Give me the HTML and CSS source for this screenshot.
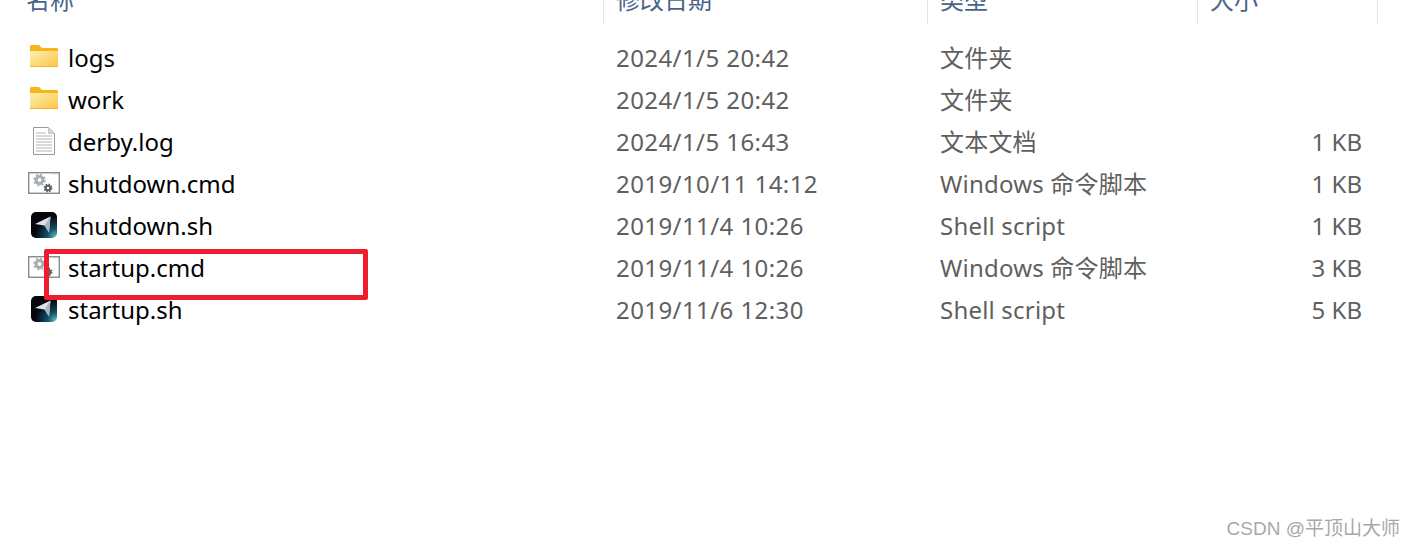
FILE: index.html
```html
<!DOCTYPE html>
<html lang="en">
<head>
    <meta charset="UTF-8">
    <meta name="viewport" content="width=device-width, initial-scale=1.0">
    <title>Explorer file list</title>
    <link rel="stylesheet" href="styles.css">
</head>
<body>
    <svg class="icon-defs" width="0" height="0">
        <defs>
            <linearGradient id="folderFill" x1="0" y1="0" x2="1" y2="1">
                <stop offset="0" stop-color="#fdeeb4"/>
                <stop offset="1" stop-color="#fcc73f"/>
            </linearGradient>
            <radialGradient id="termGlow" cx="0.95" cy="0.95" r="0.8">
                <stop offset="0" stop-color="#5cc4b0"/>
                <stop offset="0.4" stop-color="#12506a"/>
                <stop offset="1" stop-color="#04060b"/>
            </radialGradient>
            <symbol id="folder" viewBox="0 0 28 22">
                <path d="M0 1.500C0 .7.7 0 1.500 0h7.500l3 3h14.500c.8 0 1.500.7 1.500 1.500V20.500c0 .8-.7 1.500-1.500 1.500H1.500C.7 22 0 21.300 0 20.500z" fill="#f7b519"/>
                <path d="M0 6h28v14.800c0 .7-.5 1.200-1.200 1.200H1.200C.5 22 0 21.500 0 20.800z" fill="url(#folderFill)"/>
                <path d="M0 21h28v1H0z" fill="#f3b52a"/>
            </symbol>
            <symbol id="textfile" viewBox="0 0 22 28">
                <path d="M.5.500h15l6 6v21H.5z" fill="#fff" stroke="#9a9a9a"/>
                <path d="M15.500.500v6h6z" fill="#d8d8d8" stroke="#b0b0b0" stroke-width=".6"/>
                <path d="M3 6h10M3 9h16M3 12h16M3 15h16M3 18h16M3 21h16M3 24h16" stroke="#b4b4b4"/>
            </symbol>
            <symbol id="gearbox" viewBox="0 0 32 22">
                <rect x=".7" y=".7" width="30.600" height="20.600" fill="#fff" stroke="#8a8a8a" stroke-width="1.400"/>
                <path d="M25 2h1M27 2h1M29 2h1" stroke="#bdbdbd"/>
                <circle cx="11.500" cy="8" r="3.400" fill="none" stroke="#a7abb2" stroke-width="3"/>
                <circle cx="11.500" cy="8" r="5.500" fill="none" stroke="#a7abb2" stroke-width="1.600" stroke-dasharray="2.200 2.100"/>
                <circle cx="20" cy="16" r="2.300" fill="none" stroke="#595e66" stroke-width="2"/>
                <circle cx="20" cy="16" r="3.800" fill="none" stroke="#595e66" stroke-width="1.300" stroke-dasharray="1.600 1.400"/>
            </symbol>
            <symbol id="terminal" viewBox="0 0 26 26">
                <rect width="26" height="26" rx="5" fill="url(#termGlow)"/>
                <path d="M4 12 19.500 4.500 18 20.500 13.500 13.500z" fill="#dfe3e7"/>
                <path d="M13.500 13.500 19.500 4.500 18 20.500z" fill="#aab4bc"/>
            </symbol>
        </defs>
    </svg>

    <div class="file-list">
        <div class="list-head">
            <div class="head-cell head-name">名称</div>
            <div class="head-cell">修改日期</div>
            <div class="head-cell">类型</div>
            <div class="head-cell">大小</div>
        </div>

        <div class="file-row">
            <div class="file-name"><span class="file-icon"><svg class="ico-folder"><use href="#folder"/></svg></span>logs</div>
            <div class="file-date">2024/1/5 20:42</div>
            <div class="file-type">文件夹</div>
            <div class="file-size"></div>
        </div>
        <div class="file-row">
            <div class="file-name"><span class="file-icon"><svg class="ico-folder"><use href="#folder"/></svg></span>work</div>
            <div class="file-date">2024/1/5 20:42</div>
            <div class="file-type">文件夹</div>
            <div class="file-size"></div>
        </div>
        <div class="file-row">
            <div class="file-name"><span class="file-icon"><svg class="ico-text"><use href="#textfile"/></svg></span>derby.log</div>
            <div class="file-date">2024/1/5 16:43</div>
            <div class="file-type">文本文档</div>
            <div class="file-size">1 KB</div>
        </div>
        <div class="file-row">
            <div class="file-name"><span class="file-icon"><svg class="ico-gear"><use href="#gearbox"/></svg></span>shutdown.cmd</div>
            <div class="file-date">2019/10/11 14:12</div>
            <div class="file-type">Windows 命令脚本</div>
            <div class="file-size">1 KB</div>
        </div>
        <div class="file-row">
            <div class="file-name"><span class="file-icon"><svg class="ico-term"><use href="#terminal"/></svg></span>shutdown.sh</div>
            <div class="file-date">2019/11/4 10:26</div>
            <div class="file-type">Shell script</div>
            <div class="file-size">1 KB</div>
        </div>
        <div class="file-row">
            <div class="file-name"><span class="file-icon"><svg class="ico-gear"><use href="#gearbox"/></svg></span>startup.cmd</div>
            <div class="file-date">2019/11/4 10:26</div>
            <div class="file-type">Windows 命令脚本</div>
            <div class="file-size">3 KB</div>
        </div>
        <div class="file-row">
            <div class="file-name"><span class="file-icon"><svg class="ico-term"><use href="#terminal"/></svg></span>startup.sh</div>
            <div class="file-date">2019/11/6 12:30</div>
            <div class="file-type">Shell script</div>
            <div class="file-size">5 KB</div>
        </div>
    </div>

    <div class="red-mark"></div>
    <div class="watermark">CSDN @平顶山大师</div>
</body>
</html>
```
FILE: styles.css
```css
* {
    margin: 0;
    padding: 0;
    box-sizing: border-box;
}

html, body {
    height: 100%;
    overflow: hidden;
}

body {
    position: relative;
    background: #fff;
    font-family: "Noto Sans", "Noto Sans CJK SC", sans-serif;
}

.icon-defs {
    position: absolute;
}

.list-head {
    display: grid;
    grid-template-columns: 603px 324px 270px 180px 1px;
    height: 24px;
    margin-bottom: 13px;
    overflow: hidden;
    color: #48648a;
    font-family: "Noto Sans CJK SC", sans-serif;
    font-size: 24px;
    line-height: 24px;
}

.head-cell {
    height: 37px;
    margin-top: -13px;
    padding-left: 12px;
    border-left: 1px solid #e5e5e5;
    white-space: nowrap;
}

.head-name {
    padding-left: 26px;
    border-left: none;
}

.list-head::after {
    content: "";
    height: 37px;
    margin-top: -13px;
    border-left: 1px solid #e5e5e5;
}

.file-row {
    display: grid;
    grid-template-columns: 603px 324px 270px 165px;
    height: 42px;
    align-items: center;
    font-size: 24px;
    line-height: 32px;
    color: #5f5f5f;
    white-space: nowrap;
}

.file-name {
    display: flex;
    align-items: center;
    padding-left: 28px;
    color: #000;
}

.file-icon {
    display: flex;
    align-items: center;
    justify-content: center;
    width: 32px;
    height: 30px;
    margin-right: 8px;
    margin-bottom: 2px;
}

.ico-folder {
    width: 28px;
    height: 22px;
    margin-bottom: 2px;
}

.ico-text {
    width: 22px;
    height: 28px;
}

.ico-gear {
    width: 32px;
    height: 22px;
}

.ico-term {
    width: 26px;
    height: 26px;
}

.file-date {
    padding-left: 13px;
    letter-spacing: 0.42px;
}

.file-type {
    padding-left: 13px;
    letter-spacing: 0.2px;
}

.file-size {
    text-align: right;
}

.red-mark {
    position: absolute;
    left: 44px;
    top: 249px;
    width: 324px;
    height: 51px;
    border: 5px solid #ee1c2e;
    border-radius: 2px;
}

.watermark {
    position: absolute;
    right: 15px;
    bottom: 7px;
    font-family: "Liberation Sans", "Noto Sans CJK SC", sans-serif;
    font-size: 19px;
    color: #a8a8a8;
}
```
